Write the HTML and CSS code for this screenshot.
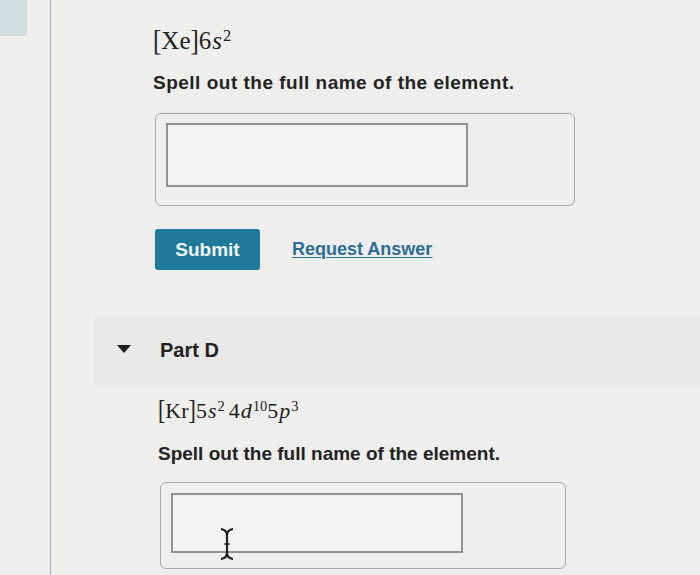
FILE: index.html
```html
<!DOCTYPE html>
<html lang="en">
<head>
<meta charset="utf-8">
<title>Part D</title>
<link rel="stylesheet" href="styles.css">
</head>
<body>
<div class="page">
  <aside class="gutter"><div class="tab"></div></aside>
  <main class="content">
    <section class="part part-c">
      <p class="formula"><span class="br">[</span>Xe<span class="br">]</span>6<i>s</i><sup>2</sup></p>
      <p class="prompt prompt-c">Spell out the full name of the element.</p>
      <div class="answer-box box-c"><div class="answer-input input-c"></div></div>
      <div class="actions">
        <button class="submit" type="button">Submit</button>
        <a class="request" href="#">Request Answer</a>
      </div>
    </section>
    <section class="part-d">
      <header class="part-head">
        <span class="caret"></span>
        <h2 class="part-title">Part D</h2>
      </header>
      <div class="part-body">
        <p class="formula formula-d"><span class="br">[</span>Kr<span class="br">]</span>5<i>s</i><sup>2</sup><span class="gap"></span>4<i>d</i><sup>10</sup>5<i>p</i><sup>3</sup></p>
        <p class="prompt prompt-d">Spell out the full name of the element.</p>
        <div class="answer-box box-d">
          <div class="answer-input input-d"></div>
          <svg class="ibeam" width="14" height="32" viewBox="0 0 14 32" aria-hidden="true">
            <path d="M1 1 Q7 2 7 7 L7 25 Q7 30 1 31 M13 1 Q7 2 7 7 M7 25 Q7 30 13 31" fill="none" stroke="#222" stroke-width="2.2"/>
            <path d="M4.5 16 H9.5" stroke="#222" stroke-width="1.8"/>
          </svg>
        </div>
      </div>
    </section>
  </main>
</div>
</body>
</html>
```
FILE: styles.css
```css
html, body {
  margin: 0;
  padding: 0;
}
body {
  background: #eeeeec;
  color: #222;
  font-family: "Liberation Sans", Arial, sans-serif;
  width: 700px;
  height: 575px;
  overflow: hidden;
}
.page {
  display: grid;
  grid-template-columns: 50px 1fr;
  height: 575px;
}
.gutter {
  display: block;
}
.tab {
  width: 27px;
  height: 36px;
  background: #cfe0df;
}
.content {
  border-left: 1px solid #a9aeb7;
  display: flex;
  flex-direction: column;
}
.part-c {
  padding: 25px 0 0 102px;
  display: flex;
  flex-direction: column;
  align-items: flex-start;
}
.formula {
  margin: 0;
  font-family: "Liberation Serif", "Times New Roman", serif;
  font-size: 25px;
  line-height: 31px;
  color: #222;
  white-space: nowrap;
}
.formula i {
  font-style: italic;
  padding-left: 1px;
}
.formula sup {
  font-size: 66%;
  line-height: 0;
  vertical-align: 0.5em;
  padding-left: 1px;
}
.br {
  display: inline-block;
  transform: scaleY(1.22);
  transform-origin: 50% 60%;
}
.gap {
  display: inline-block;
  width: 4px;
}
.prompt {
  margin: 0;
  font-weight: bold;
  font-size: 19px;
  line-height: 23px;
  color: #232323;
  white-space: nowrap;
}
.prompt-c {
  margin-top: 15px;
  letter-spacing: 0.5px;
}
.answer-box {
  box-sizing: border-box;
  border: 1px solid #a8a8a8;
  border-radius: 6px;
  position: relative;
}
.box-c {
  margin: 19px 0 0 2px;
  width: 420px;
  height: 93px;
  padding: 9px 0 0 10px;
}
.answer-input {
  box-sizing: border-box;
  border: 2px solid #929292;
  background: #f2f2f0;
}
.input-c {
  width: 302px;
  height: 64px;
}
.actions {
  margin: 23px 0 0 2px;
  display: flex;
  align-items: center;
  gap: 32px;
}
.submit {
  width: 105px;
  height: 41px;
  border: none;
  border-radius: 3px;
  background: #1e7a98;
  color: #eef6f8;
  font-family: "Liberation Sans", Arial, sans-serif;
  font-weight: bold;
  font-size: 19px;
  padding: 0;
}
.request {
  color: #2c6e93;
  font-weight: bold;
  font-size: 18px;
  text-decoration: underline;
  text-decoration-thickness: 1px;
  text-underline-offset: 2px;
}
.part-d {
  display: flex;
  flex-direction: column;
}
.part-head {
  margin: 45px 0 0 44px;
  height: 70px;
  background: #e8e8e6;
  display: flex;
  align-items: center;
  padding-left: 22px;
}
.caret {
  width: 0;
  height: 0;
  border-left: 7px solid transparent;
  border-right: 7px solid transparent;
  border-top: 8px solid #1e1e1e;
  margin-top: -2px;
}
.part-title {
  margin: 0 0 0 29px;
  font-size: 20px;
  line-height: 24px;
  font-weight: bold;
  color: #222;
}
.part-body {
  padding-left: 107px;
  display: flex;
  flex-direction: column;
  align-items: flex-start;
}
.formula-d {
  margin-top: 12px;
  font-size: 22px;
  line-height: 28px;
}
.prompt-d {
  margin-top: 17px;
}
.box-d {
  margin: 17px 0 0 2px;
  width: 406px;
  height: 87px;
  padding: 10px 0 0 10px;
}
.input-d {
  width: 292px;
  height: 60px;
}
.ibeam {
  position: absolute;
  left: 59px;
  top: 45px;
}
```
